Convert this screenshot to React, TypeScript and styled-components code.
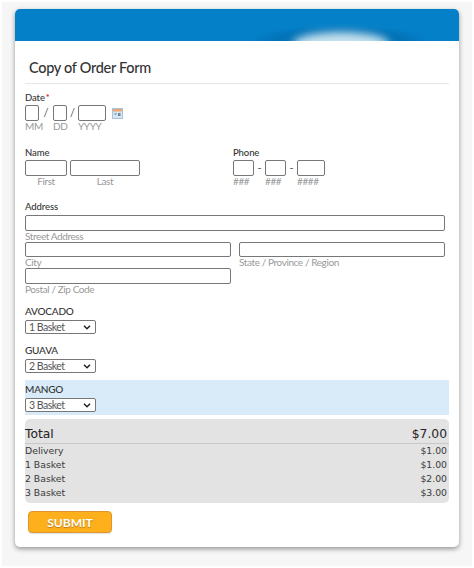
import styled, { createGlobalStyle } from "styled-components";

const GlobalStyle = createGlobalStyle`
  html, body {
    margin: 0;
    background: #fff;
  }
  body {
    font-family: Lato, "Liberation Sans", sans-serif;
    color: #333;
  }
`;

const Page = styled.div`
  width: 470px;
  height: 564px;
  margin: 2px;
  padding: 7px 13px 0;
  box-sizing: border-box;
  background: #f6f6f6;
`;

const Card = styled.div`
  width: 444px;
  height: 538px;
  background: #fff;
  border-radius: 5px;
  box-shadow: 0 2px 5px rgba(0, 0, 0, 0.4);
  overflow: hidden;
`;

const Banner = styled.div`
  position: relative;
  height: 32px;
  overflow: hidden;
  background:
    radial-gradient(ellipse 90px 16px at 325px 100%, rgba(2, 96, 160, 0.55) 0%, rgba(2, 96, 160, 0.4) 70%, rgba(4, 128, 200, 0) 100%),
    #0480c8;

  &::after {
    content: "";
    position: absolute;
    left: 278px;
    top: 23px;
    width: 96px;
    height: 24px;
    border-radius: 50%;
    background: #c6e2ee;
    filter: blur(4px);
  }
`;

const Form = styled.form`
  padding: 17px 10px 0;
`;

const Title = styled.h1`
  margin: 0 0 8px;
  padding: 0 0 5px 4px;
  font-size: 14.5px;
  line-height: 20px;
  letter-spacing: -0.3px;
  font-weight: 500;
  color: #333;
  border-bottom: 1px solid #e6e6e6;
`;

const Label = styled.div`
  font-size: 9.5px;
  line-height: 12px;
  letter-spacing: -0.1px;
  font-weight: 500;
  color: #333;
`;

const Required = styled.span`
  color: #d0021b;
  margin-left: 1px;
`;

const Row = styled.div<{ $gap?: number }>`
  display: flex;
  gap: ${(p) => p.$gap ?? 0}px;
`;

const Part = styled.div<{ $w: number; $center?: boolean }>`
  display: flex;
  flex-direction: column;
  width: ${(p) => p.$w}px;
  align-items: ${(p) => (p.$center ? "center" : "flex-start")};
`;

const Input = styled.input<{ $h?: number }>`
  display: block;
  box-sizing: border-box;
  width: 100%;
  height: ${(p) => p.$h ?? 16}px;
  margin: 0;
  padding: 0;
  background: #fff;
  border: 1px solid #777;
  border-radius: 2px;
`;

const Hint = styled.span`
  font-size: 10px;
  line-height: 11px;
  letter-spacing: -0.4px;
  color: #999;
  white-space: nowrap;
`;

const Separator = styled.span<{ $w: number }>`
  width: ${(p) => p.$w}px;
  height: 16px;
  font-size: 11px;
  line-height: 16px;
  text-align: center;
  color: #555;
`;

const Calendar = styled.svg`
  display: block;
  margin: 3px 0 0 6px;
`;

const Columns = styled.div`
  display: flex;
  margin-top: 15px;
`;

const NameColumn = styled.div`
  width: 208px;
`;

const Fields = styled.div`
  margin-top: 1px;
`;

const Address = styled.div`
  margin-top: 14px;
`;

const AddressGrid = styled.div`
  display: grid;
  grid-template-columns: 206px 206px;
  column-gap: 8px;
  margin-top: 2px;
`;

const Wide = styled.div`
  grid-column: 1 / -1;
`;

const Products = styled.div`
  margin-top: 7px;
`;

const Product = styled.div<{ $active?: boolean }>`
  box-sizing: border-box;
  height: ${(p) => (p.$active ? 35 : 39)}px;
  padding-top: 3px;
  background: ${(p) => (p.$active ? "#d9ebf8" : "transparent")};
`;

const ProductName = styled.div`
  font-size: 10px;
  line-height: 13px;
  letter-spacing: -0.2px;
  font-weight: 500;
  color: #333;
`;

const SelectBox = styled.div`
  position: relative;
  width: 71px;
  margin-top: 2px;
`;

const Select = styled.select`
  display: block;
  box-sizing: border-box;
  width: 100%;
  height: 14px;
  margin: 0;
  padding: 0 0 0 3px;
  appearance: none;
  font-family: Lato, "Liberation Sans", sans-serif;
  font-size: 10.5px;
  letter-spacing: -0.5px;
  line-height: 12px;
  color: #555;
  background: #fff;
  border: 1px solid #777;
  border-radius: 2px;
`;

const Chevron = styled.svg`
  position: absolute;
  right: 5px;
  top: 5px;
  pointer-events: none;
`;

const Summary = styled.div`
  margin-top: 4px;
  padding: 6px 0 3px;
  background: #e3e3e3;
  border-radius: 5px;
  font-family: "DejaVu Sans", Verdana, sans-serif;
`;

const TotalRow = styled.div`
  display: flex;
  justify-content: space-between;
  padding-right: 2px;
  font-size: 12.3px;
  line-height: 18px;
  color: #222;
  border-bottom: 1px solid #c8c8c8;
`;

const LineRow = styled.div`
  display: flex;
  justify-content: space-between;
  padding-right: 2px;
  font-size: 9.3px;
  line-height: 14px;
  color: #3a3a3a;
`;

const Submit = styled.button`
  display: block;
  width: 84px;
  height: 22px;
  margin: 8px 0 0 3px;
  padding: 0;
  font-family: Lato, "Liberation Sans", sans-serif;
  font-size: 12px;
  font-weight: 700;
  color: #fff;
  text-shadow: 0 1px 1px rgba(120, 70, 0, 0.5);
  background: #fdb01c;
  border: 1px solid #e0962a;
  border-radius: 4px;
  box-shadow: 0 1px 1px rgba(0, 0, 0, 0.12);
`;

const lines = [
  ["Delivery", "$1.00"],
  ["1 Basket", "$1.00"],
  ["2 Basket", "$2.00"],
  ["3 Basket", "$3.00"],
];

const products = [
  { name: "AVOCADO", value: "1 Basket" },
  { name: "GUAVA", value: "2 Basket" },
  { name: "MANGO", value: "3 Basket", active: true },
];

export default function App() {
  return (
    <>
      <GlobalStyle />
      <Page>
        <Card>
          <Banner />
          <Form>
            <Title>Copy of Order Form</Title>

            <Label>
              Date<Required>*</Required>
            </Label>
            <Fields>
              <Row>
                <Part $w={14}>
                  <Input />
                  <Hint>MM</Hint>
                </Part>
                <Separator $w={14}>/</Separator>
                <Part $w={14}>
                  <Input />
                  <Hint>DD</Hint>
                </Part>
                <Separator $w={11}>/</Separator>
                <Part $w={28}>
                  <Input />
                  <Hint>YYYY</Hint>
                </Part>
                <Calendar width="11" height="11" viewBox="0 0 11 11">
                  <rect x="0.5" y="0.5" width="10" height="10" fill="#d5e6f3" stroke="#a9c4d9" />
                  <rect x="1" y="1" width="9" height="2.5" fill="#e8a878" />
                  <rect x="2.5" y="5" width="2" height="2" fill="#8fa9c0" />
                  <rect x="6" y="5" width="2.5" height="3" fill="#6d8aa6" />
                </Calendar>
              </Row>
            </Fields>

            <Columns>
              <NameColumn>
                <Label>Name</Label>
                <Fields>
                  <Row $gap={3}>
                    <Part $w={42} $center>
                      <Input />
                      <Hint>First</Hint>
                    </Part>
                    <Part $w={70} $center>
                      <Input />
                      <Hint>Last</Hint>
                    </Part>
                  </Row>
                </Fields>
              </NameColumn>
              <div>
                <Label>Phone</Label>
                <Fields>
                  <Row>
                    <Part $w={21}>
                      <Input />
                      <Hint>###</Hint>
                    </Part>
                    <Separator $w={11}>-</Separator>
                    <Part $w={21}>
                      <Input />
                      <Hint>###</Hint>
                    </Part>
                    <Separator $w={11}>-</Separator>
                    <Part $w={28}>
                      <Input />
                      <Hint>####</Hint>
                    </Part>
                  </Row>
                </Fields>
              </div>
            </Columns>

            <Address>
              <Label>Address</Label>
              <AddressGrid>
                <Wide>
                  <Part $w={420}>
                    <Input />
                    <Hint>Street Address</Hint>
                  </Part>
                </Wide>
                <Part $w={206}>
                  <Input $h={15} />
                  <Hint>City</Hint>
                </Part>
                <Part $w={206}>
                  <Input $h={15} />
                  <Hint>State / Province / Region</Hint>
                </Part>
                <Part $w={206}>
                  <Input />
                  <Hint>Postal / Zip Code</Hint>
                </Part>
              </AddressGrid>
            </Address>

            <Products>
              {products.map((item) => (
                <Product key={item.name} $active={item.active}>
                  <ProductName>{item.name}</ProductName>
                  <SelectBox>
                    <Select defaultValue={item.value}>
                      <option>{item.value}</option>
                    </Select>
                    <Chevron width="8" height="5" viewBox="0 0 8 5">
                      <path d="M1 0.8 L4 3.8 L7 0.8" fill="none" stroke="#222" strokeWidth="1.5" />
                    </Chevron>
                  </SelectBox>
                </Product>
              ))}
            </Products>

            <Summary>
              <TotalRow>
                <span>Total</span>
                <span>$7.00</span>
              </TotalRow>
              {lines.map(([name, price]) => (
                <LineRow key={name}>
                  <span>{name}</span>
                  <span>{price}</span>
                </LineRow>
              ))}
            </Summary>

            <Submit type="button">SUBMIT</Submit>
          </Form>
        </Card>
      </Page>
    </>
  );
}
